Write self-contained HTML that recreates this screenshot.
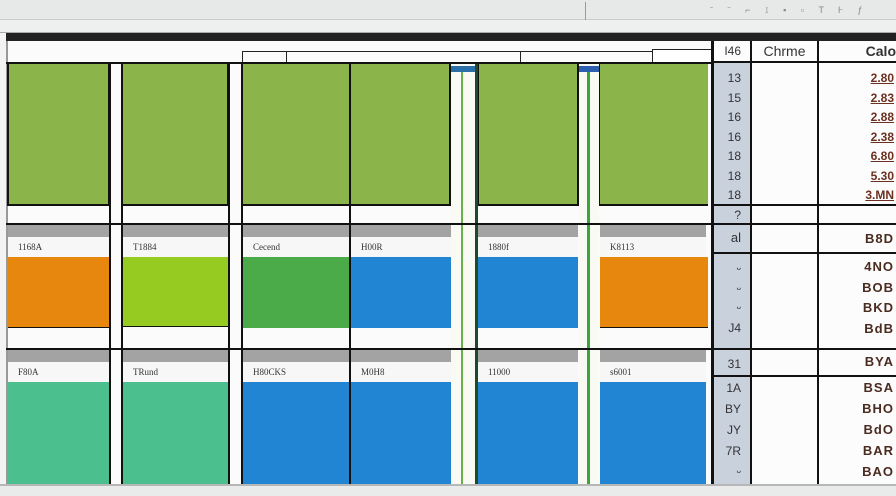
<!DOCTYPE html>
<html><head><meta charset="utf-8"><style>
*{margin:0;padding:0;box-sizing:border-box}
body{width:896px;height:496px;overflow:hidden;background:#f2f3f2;position:relative;font-family:"Liberation Sans",sans-serif}
div{position:absolute}
.g{background:#8bb54a;border:2px solid #111}
.hd{background:#a3a3a3}
.lb{background:#f7f7f7;font-size:9px;color:#333;padding:5px 0 0 10px;font-family:"Liberation Serif",serif}
.n{font-size:12px;color:#333;text-align:right;width:100%;padding-right:10px}
.v{font-size:12px;color:#6b3020;font-weight:bold;text-align:right;width:100%;padding-right:2px;text-decoration:underline}
.w{font-size:13px;color:#4a2b20;font-weight:bold;text-align:right;width:100%;padding-right:2px;letter-spacing:1px}
</style></head><body>
<div style="left:0;top:0;width:896px;height:20px;background:#e6e9e7;border-bottom:1px solid #c9ccca"></div>
<div style="left:585px;top:2px;width:1px;height:18px;background:#999"></div>
<div style="left:710px;top:5px;font-size:9px;color:#888;letter-spacing:6px">⁻ ⁻ ⌐ ፤ ▪ ▫ T Ꮀ ƒ</div>
<div style="left:0;top:20px;width:896px;height:13px;background:#eef0ef;border-bottom:1px solid #aaa"></div>
<div style="left:6px;top:33px;width:890px;height:8px;background:#222"></div>
<div style="left:6px;top:41px;width:890px;height:443px;background:#fbfbfb"></div>
<div style="left:6px;top:41px;width:2px;height:445px;background:#999"></div>
<div style="left:242px;top:51px;width:470px;height:12px;border:1px solid #222;border-bottom:none"></div>
<div style="left:286px;top:51px;width:1px;height:12px;background:#222"></div>
<div style="left:520px;top:51px;width:1px;height:12px;background:#222"></div>
<div style="left:652px;top:49px;width:60px;height:14px;border:1px solid #222;border-bottom:none;background:#fff"></div>
<div style="left:6px;top:62px;width:706px;height:2px;background:#111"></div>

<div class="g" style="left:7px;top:62px;width:103px;height:144px"></div>
<div class="g" style="left:121px;top:62px;width:108px;height:144px"></div>
<div class="g" style="left:241px;top:62px;width:110px;height:144px"></div>
<div class="g" style="left:349px;top:62px;width:102px;height:144px"></div>
<div class="g" style="left:477px;top:62px;width:102px;height:144px"></div>
<div class="g" style="left:598px;top:62px;width:110px;height:144px;border-right:none"></div>
<div style="left:451px;top:64px;width:24px;height:420px;background:#fafaf5"></div>
<div style="left:451px;top:66px;width:24px;height:6px;background:#2a6fa8"></div>
<div style="left:461px;top:72px;width:2px;height:412px;background:#6ab04a"></div>
<div style="left:475px;top:64px;width:3px;height:420px;background:#1e4a2a"></div>
<div style="left:579px;top:64px;width:20px;height:420px;background:#fafaf5"></div>
<div style="left:579px;top:66px;width:20px;height:6px;background:#2c5fb0"></div>
<div style="left:587px;top:72px;width:3px;height:412px;background:#3aa53a"></div>

<div style="left:6px;top:223px;width:706px;height:2px;background:#111"></div>
<div style="left:6px;top:348px;width:706px;height:2px;background:#111"></div>
<div style="left:109px;top:62px;width:2px;height:422px;background:#111"></div>
<div style="left:121px;top:62px;width:2px;height:422px;background:#111"></div>
<div style="left:228px;top:62px;width:2px;height:422px;background:#111"></div>
<div style="left:241px;top:62px;width:2px;height:422px;background:#111"></div>
<div style="left:349px;top:62px;width:2px;height:422px;background:#111"></div>

<div class="hd" style="left:8px;top:225px;width:101px;height:12px"></div><div class="lb" style="left:8px;top:237px;width:101px;height:20px">1168A</div><div style="left:8px;top:257px;width:101px;height:71px;background:#e8870e;border-bottom:1px solid #111"></div>
<div class="hd" style="left:123px;top:225px;width:105px;height:12px"></div><div class="lb" style="left:123px;top:237px;width:105px;height:20px">T1884</div><div style="left:123px;top:257px;width:105px;height:70px;background:#96cc22;border-bottom:1px solid #111"></div>
<div class="hd" style="left:243px;top:225px;width:106px;height:12px"></div><div class="lb" style="left:243px;top:237px;width:106px;height:20px">Cecend</div><div style="left:243px;top:257px;width:106px;height:71px;background:#4aab48"></div>
<div class="hd" style="left:351px;top:225px;width:100px;height:12px"></div><div class="lb" style="left:351px;top:237px;width:100px;height:20px">H00R</div><div style="left:351px;top:257px;width:100px;height:71px;background:#2285d4"></div>
<div class="hd" style="left:478px;top:225px;width:100px;height:12px"></div><div class="lb" style="left:478px;top:237px;width:100px;height:20px">1880f</div><div style="left:478px;top:257px;width:100px;height:71px;background:#2285d4"></div>
<div class="hd" style="left:600px;top:225px;width:106px;height:12px"></div><div class="lb" style="left:600px;top:237px;width:106px;height:20px">K8113</div><div style="left:600px;top:257px;width:108px;height:71px;background:#e8870e;border-bottom:1px solid #111"></div>

<div class="hd" style="left:8px;top:350px;width:101px;height:12px"></div><div class="lb" style="left:8px;top:362px;width:101px;height:20px">F80A</div><div style="left:8px;top:382px;width:101px;height:102px;background:#4cbf8e"></div>
<div class="hd" style="left:123px;top:350px;width:105px;height:12px"></div><div class="lb" style="left:123px;top:362px;width:105px;height:20px">TRund</div><div style="left:123px;top:382px;width:105px;height:102px;background:#4cbf8e"></div>
<div class="hd" style="left:243px;top:350px;width:106px;height:12px"></div><div class="lb" style="left:243px;top:362px;width:106px;height:20px">H80CKS</div><div style="left:243px;top:382px;width:106px;height:102px;background:#2285d4"></div>
<div class="hd" style="left:351px;top:350px;width:100px;height:12px"></div><div class="lb" style="left:351px;top:362px;width:100px;height:20px">M0H8</div><div style="left:351px;top:382px;width:100px;height:102px;background:#2285d4"></div>
<div class="hd" style="left:478px;top:350px;width:100px;height:12px"></div><div class="lb" style="left:478px;top:362px;width:100px;height:20px">11000</div><div style="left:478px;top:382px;width:100px;height:102px;background:#2285d4"></div>
<div class="hd" style="left:600px;top:350px;width:106px;height:12px"></div><div class="lb" style="left:600px;top:362px;width:106px;height:20px">s6001</div><div style="left:600px;top:382px;width:106px;height:102px;background:#2285d4"></div>

<div style="left:712px;top:41px;width:184px;height:443px;background:#fcfcfc"></div>
<div style="left:712px;top:62px;width:39px;height:422px;background:#c9d1dd"></div>
<div style="left:711px;top:41px;width:3px;height:443px;background:#111"></div>
<div style="left:750px;top:41px;width:2px;height:443px;background:#111"></div>
<div style="left:817px;top:41px;width:2px;height:443px;background:#111"></div>
<div style="left:712px;top:61px;width:184px;height:2px;background:#111"></div>
<div style="left:712px;top:204px;width:184px;height:2px;background:#111"></div>
<div style="left:712px;top:223px;width:184px;height:2px;background:#111"></div>
<div style="left:712px;top:252px;width:184px;height:2px;background:#111"></div>
<div style="left:712px;top:348px;width:184px;height:2px;background:#111"></div>
<div style="left:712px;top:375px;width:184px;height:2px;background:#111"></div>
<div style="left:712px;top:44px;width:39px;font-size:12px" class="n">I46</div>
<div style="left:752px;top:43px;width:65px;font-size:14px;color:#333;text-align:center">Chrme</div>
<div style="left:819px;top:43px;width:77px;font-size:14px;color:#333;text-align:right;font-weight:bold">Calo</div>
<div style="left:712px;top:69px;width:39px;line-height:19.5px" class="n">13<br>15<br>16<br>16<br>18<br>18<br>18</div>
<div style="left:819px;top:69px;width:77px;line-height:19.5px" class="v">2.80<br>2.83<br>2.88<br>2.38<br>6.80<br>5.30<br>3.MN</div>
<div style="left:712px;top:208px;width:39px" class="n">?</div>
<div style="left:712px;top:230px;width:39px;font-size:13px" class="n">al</div>
<div style="left:819px;top:231px;width:77px" class="w">B8D</div>
<div style="left:712px;top:260px;width:39px;line-height:19.5px" class="n">ᵕ<br>ᵕ<br>ᵕ<br>J4</div>
<div style="left:819px;top:257px;width:77px;line-height:20.5px" class="w">4NO<br>BOB<br>BKD<br>BdB</div>
<div style="left:712px;top:357px;width:39px" class="n">31</div>
<div style="left:819px;top:354px;width:77px" class="w">BYA</div>
<div style="left:712px;top:378px;width:39px;line-height:21px" class="n">1A<br>BY<br>JY<br>7R<br>ᵕ</div>
<div style="left:819px;top:377px;width:77px;line-height:21px" class="w">BSA<br>BHO<br>BdO<br>BAR<br>BAO</div>

<div style="left:0;top:484px;width:896px;height:2px;background:#b5b8b6"></div>
<div style="left:0;top:486px;width:896px;height:10px;background:#e9ebea"></div>
</body></html>
